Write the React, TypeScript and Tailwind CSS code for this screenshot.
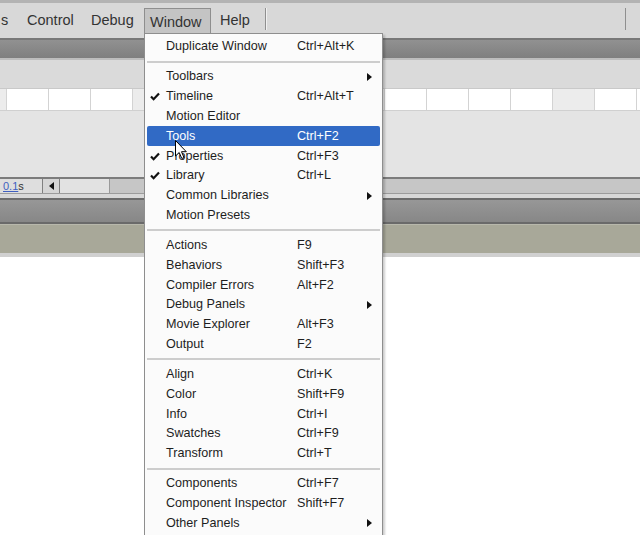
import React from "react";

type Item =
  | "sep"
  | { label: string; sc?: string; arrow?: boolean; check?: boolean; hl?: boolean };

const items: Item[] = [
  { label: "Duplicate Window", sc: "Ctrl+Alt+K" },
  "sep",
  { label: "Toolbars", arrow: true },
  { label: "Timeline", sc: "Ctrl+Alt+T", check: true },
  { label: "Motion Editor" },
  { label: "Tools", sc: "Ctrl+F2", hl: true },
  { label: "Properties", sc: "Ctrl+F3", check: true },
  { label: "Library", sc: "Ctrl+L", check: true },
  { label: "Common Libraries", arrow: true },
  { label: "Motion Presets" },
  "sep",
  { label: "Actions", sc: "F9" },
  { label: "Behaviors", sc: "Shift+F3" },
  { label: "Compiler Errors", sc: "Alt+F2" },
  { label: "Debug Panels", arrow: true },
  { label: "Movie Explorer", sc: "Alt+F3" },
  { label: "Output", sc: "F2" },
  "sep",
  { label: "Align", sc: "Ctrl+K" },
  { label: "Color", sc: "Shift+F9" },
  { label: "Info", sc: "Ctrl+I" },
  { label: "Swatches", sc: "Ctrl+F9" },
  { label: "Transform", sc: "Ctrl+T" },
  "sep",
  { label: "Components", sc: "Ctrl+F7" },
  { label: "Component Inspector", sc: "Shift+F7" },
  { label: "Other Panels", arrow: true },
];

const cells = Array.from({ length: 17 }, (_, i) => i);
const grayCells = new Set([0, 4, 9, 14]);

function Check({ white }: { white?: boolean }) {
  return (
    <svg width="10" height="9" viewBox="0 0 10 9">
      <path
        d="M1 4.5 L3.6 7.2 L9 1.5"
        fill="none"
        stroke={white ? "#fff" : "#111"}
        strokeWidth="2.2"
      />
    </svg>
  );
}

function Arrow() {
  return (
    <svg width="5" height="8" viewBox="0 0 5 8">
      <path d="M0 0 L5 4 L0 8 Z" fill="#111" />
    </svg>
  );
}

export default function App() {
  return (
    <div
      className="relative w-[640px] h-[535px] overflow-hidden bg-white"
      style={{ fontFamily: '"Liberation Sans", Arial, sans-serif' }}
    >
      {/* top edge */}
      <div className="h-[3px] bg-[#b3b3b3]" />
      {/* menubar */}
      <div className="h-[35px] bg-[#d8d8d8] flex items-start text-[14.5px] text-[#333]">
        <div className="w-[20px] h-[25px] mt-[5px] pl-[1px] flex items-center">s</div>
        <div className="w-[64px] h-[25px] mt-[5px] pl-[7px] flex items-center">Control</div>
        <div className="w-[60px] h-[25px] mt-[5px] pl-[7px] flex items-center">Debug</div>
        <div className="w-[67px] h-[30px] mt-[5px] pl-[5px] flex items-start pt-[3px] bg-[#c4c4c4] border border-b-0 border-[#8e8e8e]">
          Window
        </div>
        <div className="w-[54px] h-[25px] mt-[5px] pl-[9px] flex items-center">Help</div>
        <div className="w-[1px] h-[22px] mt-[5px] bg-[#8f8f8f]" />
        <div className="w-[1px] h-[22px] mt-[5px] bg-[#f0f0f0]" />
        <div className="flex-1" />
        <div className="w-[1px] h-[22px] mt-[5px] bg-[#8f8f8f] mr-[14px]" />
      </div>
      {/* dark panel bar */}
      <div className="h-[2px] bg-[#787878]" />
      <div className="h-[18px] bg-gradient-to-b from-[#919191] to-[#7f7f7f]" />
      <div className="h-[2px] bg-[#bdbdbd]" />
      {/* light area */}
      <div className="h-[28px] bg-[#dadada]" />
      {/* frame row */}
      <div className="h-[1px] bg-[#c9c9c9]" />
      <div className="h-[21px] flex ml-[-35px]">
        {cells.map((i) => (
          <div
            key={i}
            className={`w-[42px] shrink-0 border-r border-[#d3d3d3] ${
              grayCells.has(i) ? "bg-[#ececec]" : "bg-white"
            }`}
          />
        ))}
      </div>
      <div className="h-[1px] bg-[#d0d0d0]" />
      <div className="h-[66px] bg-[#e4e4e4]" />
      {/* scroll row */}
      <div className="h-[2px] bg-[#7c7c7c]" />
      <div className="h-[14px] flex bg-[#c6c6c6]">
        <div className="w-[42px] bg-[#dedede] flex items-center pl-[3px] text-[11px] leading-none">
          <span className="text-[#3f5fc0] underline">0.1</span>
          <span className="text-[#333]">s</span>
        </div>
        <div className="w-[18px] bg-[#d6d6d6] border-x border-[#808080] flex items-center justify-center">
          <svg width="5" height="8" viewBox="0 0 5 8">
            <path d="M5 0 L0 4 L5 8 Z" fill="#111" />
          </svg>
        </div>
        <div className="w-[50px] bg-[#e2e2e2] border-r border-[#9a9a9a]" />
      </div>
      <div className="h-[1px] bg-[#9c9c9c]" />
      <div className="h-[4px] bg-[#d8d8d8]" />
      <div className="h-[2px] bg-[#6c6c6c]" />
      <div className="h-[22px] bg-gradient-to-b from-[#979797] to-[#878787]" />
      <div className="h-[2px] bg-[#6a6a6a]" />
      <div className="h-[1px] bg-[#b8b8ac]" />
      <div className="h-[28px] bg-[#a8a899]" />
      <div className="h-[4px] bg-[#d0d0d0]" />
      <div className="h-[280px] bg-white" />

      {/* Window menu */}
      <div className="absolute left-[144px] top-[33px] w-[239px] h-[510px] bg-[#fbfbfb] border border-[#8e8e8e] px-[2px] pt-[3px] shadow-[2px_2px_2px_rgba(0,0,0,0.2)] text-[12.6px] text-[#1e1e1e]">
        {items.map((it, idx) =>
          it === "sep" ? (
            <div key={idx} className="h-[10.2px] flex items-center">
              <div className="h-[2px] w-full bg-[#cdcdcd]" />
            </div>
          ) : (
            <div
              key={idx}
              className={`h-[19.8px] flex items-center rounded-[2px] ${
                it.hl ? "bg-[#316ac5] text-white" : ""
              }`}
            >
              <div className="w-[19px] pl-[3px] flex items-center">
                {it.check ? <Check white={it.hl} /> : null}
              </div>
              <div className="w-[131px] whitespace-nowrap">{it.label}</div>
              <div className="flex-1 whitespace-nowrap">{it.sc ?? ""}</div>
              {it.arrow ? (
                <div className="mr-[8px] flex items-center">
                  <Arrow />
                </div>
              ) : null}
            </div>
          )
        )}
      </div>

      {/* mouse cursor */}
      <svg
        className="absolute left-[175px] top-[140px]"
        width="13"
        height="21"
        viewBox="0 0 13 21"
      >
        <path
          d="M0.5 0.5 L0.5 16 L4.2 12.5 L6.8 18.5 L9 17.6 L6.5 11.7 L11.3 11.7 Z"
          fill="#fff"
          stroke="#000"
          strokeWidth="1"
        />
      </svg>
    </div>
  );
}
